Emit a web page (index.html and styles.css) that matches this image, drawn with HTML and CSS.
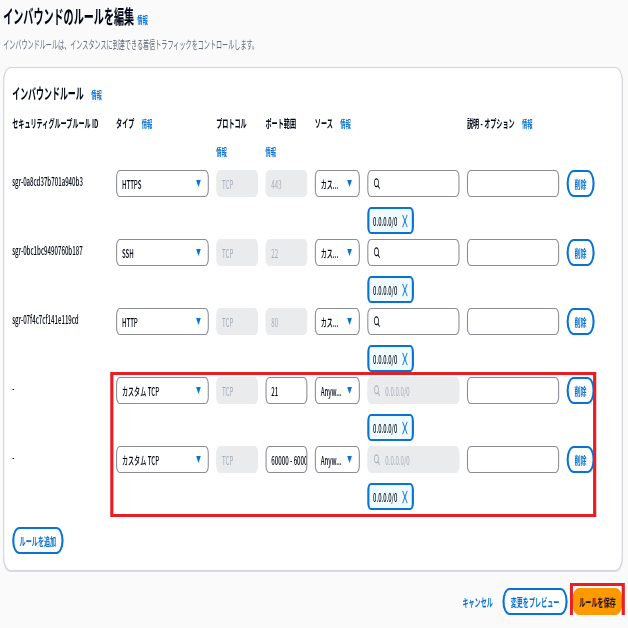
FILE: index.html
```html
<!DOCTYPE html>
<html lang="ja">
<head>
  <meta charset="UTF-8">
  <title>インバウンドのルールを編集</title>
  <link rel="stylesheet" href="styles.css">
</head>
<body>

  <div class="page">
    <h1>インバウンドのルールを編集<a class="info title-info" href="#">情報</a></h1>
    <p class="lead">インバウンドルールは、インスタンスに到達できる着信トラフィックをコントロールします。</p>

    <div class="card">
      <h2>インバウンドルール<a class="info" href="#">情報</a></h2>

      <div class="grid head">
        <div>セキュリティグループルール ID</div>
        <div>タイプ<a class="info" href="#">情報</a></div>
        <div>プロトコル<a class="info below" href="#">情報</a></div>
        <div>ポート範囲<a class="info below" href="#">情報</a></div>
        <div class="span2">ソース<a class="info" href="#">情報</a></div>
        <div>説明 - オプション<a class="info" href="#">情報</a></div>
        <div></div>
      </div>

      <div class="rules">
        <div class="grid rule">
          <div class="rid">sgr-0a8cd37b701a940b3</div>
          <div class="field select"><span>HTTPS</span><svg class="caret" viewBox="0 0 9 7"><polygon points="0,0 9,0 4.5,7"/></svg></div>
          <div class="field off">TCP</div>
          <div class="field off">443</div>
          <div class="field select"><span>カス...</span><svg class="caret" viewBox="0 0 9 7"><polygon points="0,0 9,0 4.5,7"/></svg></div>
          <div class="field search"><svg class="glass" viewBox="0 0 16 16"><circle cx="7" cy="7" r="5.2"/><line x1="10.8" y1="10.8" x2="15" y2="15"/></svg></div>
          <div class="field"></div>
          <button class="btn">削除</button>
          <div class="chip">0.0.0.0/0<svg class="close" viewBox="0 0 12 16"><line x1="1" y1="1" x2="11" y2="15"/><line x1="11" y1="1" x2="1" y2="15"/></svg></div>
        </div>

        <div class="grid rule">
          <div class="rid">sgr-0bc1bc9490760b187</div>
          <div class="field select"><span>SSH</span><svg class="caret" viewBox="0 0 9 7"><polygon points="0,0 9,0 4.5,7"/></svg></div>
          <div class="field off">TCP</div>
          <div class="field off">22</div>
          <div class="field select"><span>カス...</span><svg class="caret" viewBox="0 0 9 7"><polygon points="0,0 9,0 4.5,7"/></svg></div>
          <div class="field search"><svg class="glass" viewBox="0 0 16 16"><circle cx="7" cy="7" r="5.2"/><line x1="10.8" y1="10.8" x2="15" y2="15"/></svg></div>
          <div class="field"></div>
          <button class="btn">削除</button>
          <div class="chip">0.0.0.0/0<svg class="close" viewBox="0 0 12 16"><line x1="1" y1="1" x2="11" y2="15"/><line x1="11" y1="1" x2="1" y2="15"/></svg></div>
        </div>

        <div class="grid rule">
          <div class="rid">sgr-07f4c7cf141e119cd</div>
          <div class="field select"><span>HTTP</span><svg class="caret" viewBox="0 0 9 7"><polygon points="0,0 9,0 4.5,7"/></svg></div>
          <div class="field off">TCP</div>
          <div class="field off">80</div>
          <div class="field select"><span>カス...</span><svg class="caret" viewBox="0 0 9 7"><polygon points="0,0 9,0 4.5,7"/></svg></div>
          <div class="field search"><svg class="glass" viewBox="0 0 16 16"><circle cx="7" cy="7" r="5.2"/><line x1="10.8" y1="10.8" x2="15" y2="15"/></svg></div>
          <div class="field"></div>
          <button class="btn">削除</button>
          <div class="chip">0.0.0.0/0<svg class="close" viewBox="0 0 12 16"><line x1="1" y1="1" x2="11" y2="15"/><line x1="11" y1="1" x2="1" y2="15"/></svg></div>
        </div>

        <!-- new rules, marked with the red box -->
        <div class="marked">
          <div class="grid rule">
            <div class="rid">-</div>
            <div class="field select"><span>カスタム TCP</span><svg class="caret" viewBox="0 0 9 7"><polygon points="0,0 9,0 4.5,7"/></svg></div>
            <div class="field off">TCP</div>
            <div class="field">21</div>
            <div class="field select"><span>Anyw...</span><svg class="caret" viewBox="0 0 9 7"><polygon points="0,0 9,0 4.5,7"/></svg></div>
            <div class="field search off"><svg class="glass" viewBox="0 0 16 16"><circle cx="7" cy="7" r="5.2"/><line x1="10.8" y1="10.8" x2="15" y2="15"/></svg><span>0.0.0.0/0</span></div>
            <div class="field"></div>
            <button class="btn">削除</button>
            <div class="chip">0.0.0.0/0<svg class="close" viewBox="0 0 12 16"><line x1="1" y1="1" x2="11" y2="15"/><line x1="11" y1="1" x2="1" y2="15"/></svg></div>
          </div>

          <div class="grid rule">
            <div class="rid">-</div>
            <div class="field select"><span>カスタム TCP</span><svg class="caret" viewBox="0 0 9 7"><polygon points="0,0 9,0 4.5,7"/></svg></div>
            <div class="field off">TCP</div>
            <div class="field">60000 - 60000</div>
            <div class="field select"><span>Anyw...</span><svg class="caret" viewBox="0 0 9 7"><polygon points="0,0 9,0 4.5,7"/></svg></div>
            <div class="field search off"><svg class="glass" viewBox="0 0 16 16"><circle cx="7" cy="7" r="5.2"/><line x1="10.8" y1="10.8" x2="15" y2="15"/></svg><span>0.0.0.0/0</span></div>
            <div class="field"></div>
            <button class="btn">削除</button>
            <div class="chip">0.0.0.0/0<svg class="close" viewBox="0 0 12 16"><line x1="1" y1="1" x2="11" y2="15"/><line x1="11" y1="1" x2="1" y2="15"/></svg></div>
          </div>
        </div>
      </div>

      <button class="btn add">ルールを追加</button>
    </div>

    <div class="footer">
      <button class="link">キャンセル</button>
      <button class="btn preview">変更をプレビュー</button>
      <button class="btn save">ルールを保存</button>
    </div>
  </div>

</body>
</html>
```

FILE: styles.css
```css
body {
  margin: 0;
  background-color: #fafafa;
  font-family: "Noto Sans CJK JP", "Noto Sans", sans-serif;
  color: #000716;
  overflow: hidden;
}
/* the screenshot is squeezed sideways, so the page is laid out wide and scaled */
.page {
  width: 1185px;
  box-sizing: border-box;
  padding: 4px 0 0 6px;
  transform: scaleX(0.53);
  transform-origin: 0 0;
}
h1 {
  margin: 0;
  font-size: 19px;
  line-height: 24px;
  font-weight: 700;
}
.info {
  color: #0972d3;
  font-size: 10px;
  line-height: 1;
  font-weight: 700;
  margin-left: 14px;
  text-decoration: none;
}
.title-info {
  margin-left: 6px;
}
.info.below {
  display: block;
  margin: 16px 0 0;
}
.lead {
  margin: 8px 0 0;
  font-size: 11.5px;
  line-height: 16px;
  color: #5f6b7a;
}
.card {
  margin-top: 15px;
  width: 1169px;
  box-sizing: border-box;
  background: #fff;
  border: 1px solid #d1d5db;
  border-width: 1px 2px;
  border-radius: 14px;
  padding: 15px 15px 16px;
  box-shadow: 0 1px 1px rgba(0, 7, 22, 0.12);
}
.card h2 {
  margin: 0;
  font-size: 15px;
  line-height: 20px;
  font-weight: 700;
}
.grid {
  display: grid;
  grid-template-columns: 182px 175px 79px 79px 85px 174px 174px 53px;
  column-gap: 14px;
}
.head {
  margin-top: 12px;
  font-size: 11.5px;
  line-height: 16px;
  font-weight: 700;
}
.span2 {
  grid-column: span 2;
}
.rules {
  margin-top: 13px;
  display: flex;
  flex-direction: column;
  gap: 5px;
}
.rule {
  row-gap: 10px;
}
.rid {
  padding-top: 2px;
  font-size: 11.5px;
  line-height: 18px;
  font-weight: 500;
}
.field {
  height: 27px;
  box-sizing: border-box;
  display: flex;
  align-items: center;
  gap: 10px;
  padding: 0 9px;
  background: #fff;
  border: 1px solid #8c8c94;
  border-width: 1px 2px;
  border-radius: 7px;
  font-size: 11.5px;
  font-weight: 500;
  white-space: nowrap;
  overflow: hidden;
}
.field.off {
  background: #e9ebed;
  border-color: #e9ebed;
  color: #a4adb8;
  font-weight: 400;
}
.select {
  justify-content: space-between;
  padding-right: 13px;
}
.caret {
  width: 9px;
  height: 7px;
  flex: none;
  fill: #0972d3;
}
.search {
  padding-left: 10px;
}
.glass {
  width: 12px;
  height: 13px;
  flex: none;
  fill: none;
  stroke: #000716;
  stroke-width: 1.8;
}
.off .glass {
  stroke: #a4adb8;
}
.btn {
  height: 27px;
  box-sizing: border-box;
  padding: 0;
  background: #fff;
  border: 2px solid #0972d3;
  border-width: 2px 4px;
  border-radius: 14px;
  color: #0972d3;
  font-family: inherit;
  font-size: 11.5px;
  font-weight: 700;
  cursor: pointer;
}
.chip {
  grid-column: 6;
  justify-self: start;
  height: 27px;
  box-sizing: border-box;
  display: flex;
  align-items: center;
  gap: 9px;
  padding: 0 7px 0 7px;
  background: #f0fbff;
  border: 2px solid #0972d3;
  border-width: 2px 4px;
  border-radius: 7px;
  font-size: 11px;
  font-weight: 500;
}
.close {
  width: 12px;
  height: 14px;
  stroke: #0972d3;
  stroke-width: 1.7;
}
/* red annotation boxes */
.marked {
  position: relative;
  display: flex;
  flex-direction: column;
  gap: 5px;
}
.marked::after,
.save::after {
  content: "";
  position: absolute;
  border: 3px solid #e81e25;
  border-width: 3px 6px;
  pointer-events: none;
}
.marked::after {
  top: -5px;
  bottom: -7px;
  left: 185px;
  right: 33px;
}
.add {
  margin-top: 17px;
  padding: 0 10px;
}
.footer {
  width: 1169px;
  margin-top: 17px;
  display: flex;
  justify-content: flex-end;
  align-items: center;
  gap: 8px;
}
.link {
  height: 27px;
  padding: 0 10px;
  background: none;
  border: none;
  color: #0972d3;
  font-family: inherit;
  font-size: 11.5px;
  font-weight: 700;
}
.preview {
  width: 123px;
}
.save {
  position: relative;
  width: 96px;
  background: #ff9900;
  border-color: #ff9900;
  color: #0f141a;
}
.save::after {
  top: -7px;
  bottom: -12px;
  left: -8px;
  right: -8px;
}
```
